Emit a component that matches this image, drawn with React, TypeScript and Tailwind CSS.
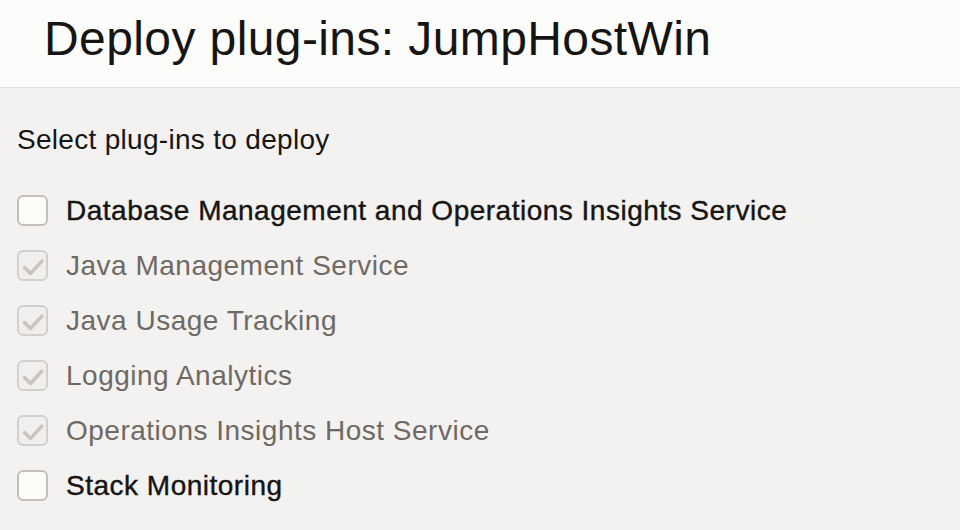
import { Check } from 'lucide-react';

const plugins = [
  { name: 'Database Management and Operations Insights Service', checked: false, disabled: false },
  { name: 'Java Management Service', checked: true, disabled: true },
  { name: 'Java Usage Tracking', checked: true, disabled: true },
  { name: 'Logging Analytics', checked: true, disabled: true },
  { name: 'Operations Insights Host Service', checked: true, disabled: true },
  { name: 'Stack Monitoring', checked: false, disabled: false },
];

export default function App() {
  return (
    <div className="w-[960px] h-[530px] overflow-hidden bg-[#f3f2f1] font-['Liberation_Sans',Arial,sans-serif]">
      <header className="h-[88px] bg-[#fcfcfb] border-b border-[#e2e0de] flex items-center pl-[44px] pb-[10px]">
        <h1 className="text-[48px] text-[#161513] leading-none tracking-[0.4px]">Deploy plug-ins: JumpHostWin</h1>
      </header>

      <div className="px-[17px] pt-[38px]">
        <p className="text-[28px] text-[#161513] leading-none tracking-[0.3px] mb-[29px]">Select plug-ins to deploy</p>
        <ul className="flex flex-col">
          {plugins.map((p) => (
            <li key={p.name} className="h-[55px] flex items-center gap-[18px]">
              <span
                className={
                  p.disabled
                    ? 'shrink-0 w-[31px] h-[31px] rounded-[6px] border-2 border-[#d3cfcc] bg-[#f1efed] flex items-center justify-center overflow-hidden'
                    : 'shrink-0 w-[31px] h-[31px] rounded-[6px] border-2 border-[#c6beb9] bg-[#fcfcfb] flex items-center justify-center'
                }
              >
                {p.checked && (
                  <svg viewBox="0 0 24 24" className="shrink-0 w-[24px] h-[24px] mt-[2px]" fill="none">
                    <path d="M3.5 12.5 L9.5 18.5 L21 6" stroke="#c9c4c1" strokeWidth="3.4" strokeLinecap="round" strokeLinejoin="round" />
                  </svg>
                )}
              </span>
              <span
                className={
                  p.disabled
                    ? 'text-[28px] leading-none tracking-[0.5px] text-[#6f6964]'
                    : 'text-[28px] leading-none tracking-[0.5px] text-[#161513] [-webkit-text-stroke:0.4px_#161513]'
                }
              >
                {p.name}
              </span>
            </li>
          ))}
        </ul>
      </div>
    </div>
  );
}
